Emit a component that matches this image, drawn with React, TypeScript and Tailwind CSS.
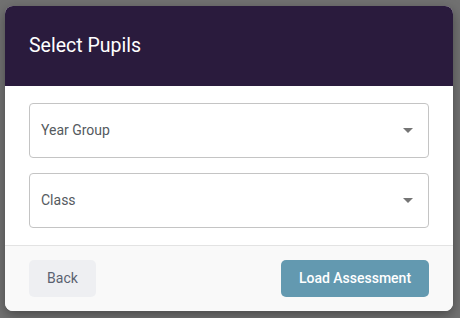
import { useState } from 'react'

function SelectField({ label }: { label: string }) {
  return (
    <div className="flex h-[55px] w-full items-center justify-between rounded-[4px] border border-[#c4c4c4] bg-white pl-[11px] pr-[15px]">
      <span className="text-[14px] text-[#555a60]">{label}</span>
      <span className="h-0 w-0 border-x-[5px] border-t-[5px] border-x-transparent border-t-[#757575]" />
    </div>
  )
}

export default function App() {
  const [yearGroup] = useState('Year Group')
  const [cls] = useState('Class')

  return (
    <div className="flex h-[318px] w-[460px] items-start bg-[#717171] pl-[5px] pt-[6px] font-['Roboto',sans-serif]">
      <div className="flex w-[448px] flex-col overflow-hidden rounded-[8px] bg-white shadow-[0_4px_12px_rgba(0,0,0,0.35)]">
        <div className="flex h-[80px] items-center bg-[#2a1b3d] px-[24px]">
          <h2 className="text-[19.5px] text-white">Select Pupils</h2>
        </div>
        <div className="flex flex-col gap-[15px] px-[24px] pb-[17px] pt-[17px]">
          <SelectField label={yearGroup} />
          <SelectField label={cls} />
        </div>
        <div className="flex h-[66px] items-center justify-between border-t border-[#e3e3e3] bg-[#f9f9f9] px-[24px]">
          <button className="h-[37px] w-[67px] rounded-[5px] bg-[#eeeff2] text-[14px] text-[#5a6170]">Back</button>
          <button className="h-[37px] w-[148px] rounded-[5px] bg-[#6399b0] text-[14px] font-medium text-white">Load Assessment</button>
        </div>
      </div>
    </div>
  )
}
